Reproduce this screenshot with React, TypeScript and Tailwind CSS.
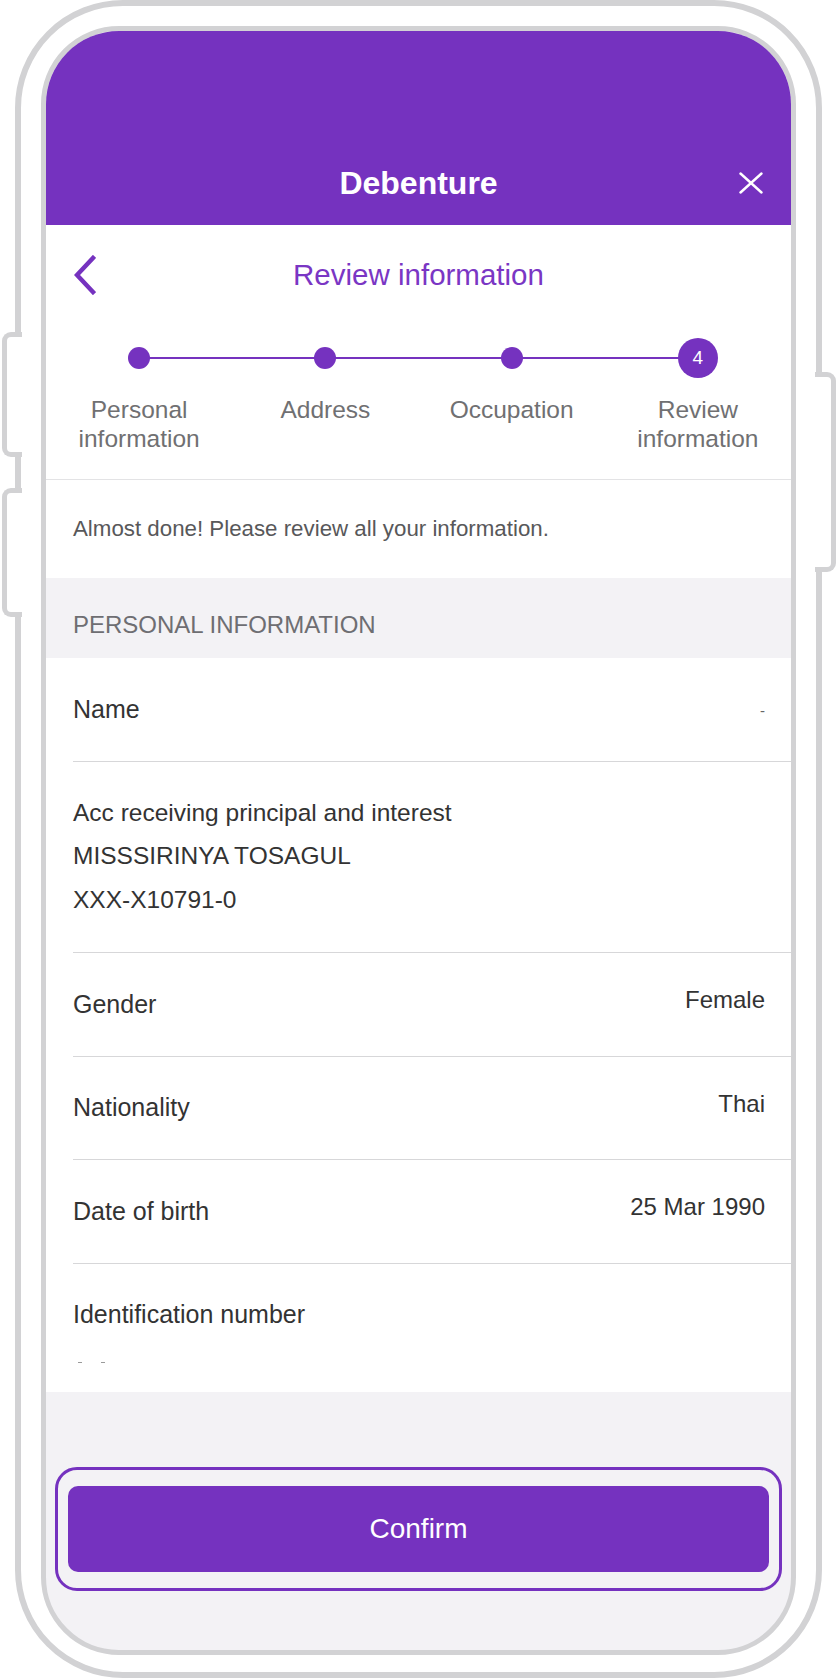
import React from "react";

const Row = ({ label, value, small }: { label: string; value: string; small?: boolean }) => (
  <div className="h-[103.5px] flex items-center justify-between border-b border-[#d7d7d9] pr-[26px]">
    <span className="text-[25px] text-[#333333]">{label}</span>
    {small ? (
      <span className="text-[15px] text-[#666666] mt-[4px]">{value}</span>
    ) : (
      <span className="text-[24px] text-[#333333] mb-[8px]">{value}</span>
    )}
  </div>
);

export default function App() {
  return (
    <div className="relative w-[837px] h-[1680px] bg-white font-['Liberation_Sans',Arial,sans-serif]">
      <div className="mx-[15px] h-[1678px] rounded-[108px] border-[6px] border-[#d2d2d4] bg-white px-[20px] pt-[20px]">
        <div className="h-[1629px] rounded-[78px] border-[5px] border-[#d2d2d4] overflow-hidden bg-[#f3f2f5] flex flex-col">
          {/* Header */}
          <div className="h-[194px] shrink-0 bg-[#7532bf] flex flex-col justify-end">
            <div className="h-[84px] grid grid-cols-[1fr_auto_1fr] items-center">
              <div />
              <span className="text-white text-[32px] font-bold">Debenture</span>
              <div className="flex justify-end pr-[28px]">
                <svg width="24" height="22" viewBox="0 0 24 22" fill="none" stroke="white" strokeWidth="2.4" strokeLinecap="round">
                  <line x1="1.5" y1="1.5" x2="22.5" y2="20.5" />
                  <line x1="22.5" y1="1.5" x2="1.5" y2="20.5" />
                </svg>
              </div>
            </div>
          </div>

          {/* White content */}
          <div className="h-[1167px] shrink-0 bg-white flex flex-col overflow-hidden">
            <div className="h-[100px] shrink-0 grid grid-cols-[1fr_auto_1fr] items-center">
              <div className="pl-[28px] flex items-center">
                <svg width="22" height="40" viewBox="0 0 22 40" fill="none" stroke="#7532bf" strokeWidth="4.5" strokeLinecap="square">
                  <polyline points="19,3 3,20 19,37" />
                </svg>
              </div>
              <span className="text-[29.5px] text-[#7a36c4]">Review information</span>
              <div />
            </div>

            {/* Stepper */}
            <div className="shrink-0 pt-[13px] pb-[26px] border-b border-[#e3e3e5]">
              <div className="relative h-[40px] grid grid-cols-4">
                <div className="absolute left-[93px] right-[93px] top-[19px] h-[2px] bg-[#7532bf]" />
                <div className="relative flex items-center justify-center">
                  <div className="w-[22px] h-[22px] rounded-full bg-[#7532bf]" />
                </div>
                <div className="relative flex items-center justify-center">
                  <div className="w-[22px] h-[22px] rounded-full bg-[#7532bf]" />
                </div>
                <div className="relative flex items-center justify-center">
                  <div className="w-[22px] h-[22px] rounded-full bg-[#7532bf]" />
                </div>
                <div className="relative flex items-center justify-center">
                  <div className="w-[40px] h-[40px] rounded-full bg-[#7532bf] flex items-center justify-center text-white text-[19px]">4</div>
                </div>
              </div>
              <div className="mt-[17px] grid grid-cols-4 text-center text-[24.5px] leading-[29px] text-[#707072]">
                <div>Personal<br />information</div>
                <div>Address</div>
                <div>Occupation</div>
                <div>Review<br />information</div>
              </div>
            </div>

            <div className="h-[98px] shrink-0 flex items-center pl-[27px] text-[22.3px] text-[#58585a]">
              Almost done! Please review all your information.
            </div>

            <div className="h-[80px] shrink-0 bg-[#f3f2f5] pl-[27px] pt-[32px] text-[24px] leading-[30px] text-[#6e6e72]">
              PERSONAL INFORMATION
            </div>

            <div className="pl-[27px] flex flex-col">
              <Row label="Name" value="-" small />
              <div className="border-b border-[#d7d7d9] pt-[29px] pb-[31px] text-[24.5px] leading-[43.5px] text-[#333333]">
                <div>Acc receiving principal and interest</div>
                <div>MISSSIRINYA TOSAGUL</div>
                <div>XXX-X10791-0</div>
              </div>
              <Row label="Gender" value="Female" />
              <Row label="Nationality" value="Thai" />
              <Row label="Date of birth" value="25 Mar 1990" />
              <div className="pt-[28px]">
                <div className="text-[25px] leading-[44px] text-[#333333]">Identification number</div>
                <div className="mt-[26px] flex gap-[19px] pl-[5px]">
                  <div className="w-[4px] h-[1px] bg-[#9a9a9a]" />
                  <div className="w-[4px] h-[1px] bg-[#9a9a9a]" />
                </div>
              </div>
            </div>
          </div>

          {/* Bottom area */}
          <div className="flex-1 pt-[75px]">
            <div className="mx-[9px] rounded-[22px] border-[3px] border-[#7532bf] px-[10px] py-[16px]">
              <div className="h-[86px] rounded-[10px] bg-[#7532bf] flex items-center justify-center text-white text-[28px]">
                Confirm
              </div>
            </div>
          </div>
        </div>
      </div>

      {/* side buttons of device frame */}
      <div className="absolute left-[2px] top-[332px] w-[20px] h-[125px] rounded-l-[9px] border-[5px] border-r-0 border-[#d2d2d4] bg-white" />
      <div className="absolute left-[2px] top-[488px] w-[20px] h-[129px] rounded-l-[9px] border-[5px] border-r-0 border-[#d2d2d4] bg-white" />
      <div className="absolute left-[815px] top-[372px] w-[21px] h-[200px] rounded-r-[9px] border-[5px] border-l-0 border-[#d2d2d4] bg-white" />
    </div>
  );
}
